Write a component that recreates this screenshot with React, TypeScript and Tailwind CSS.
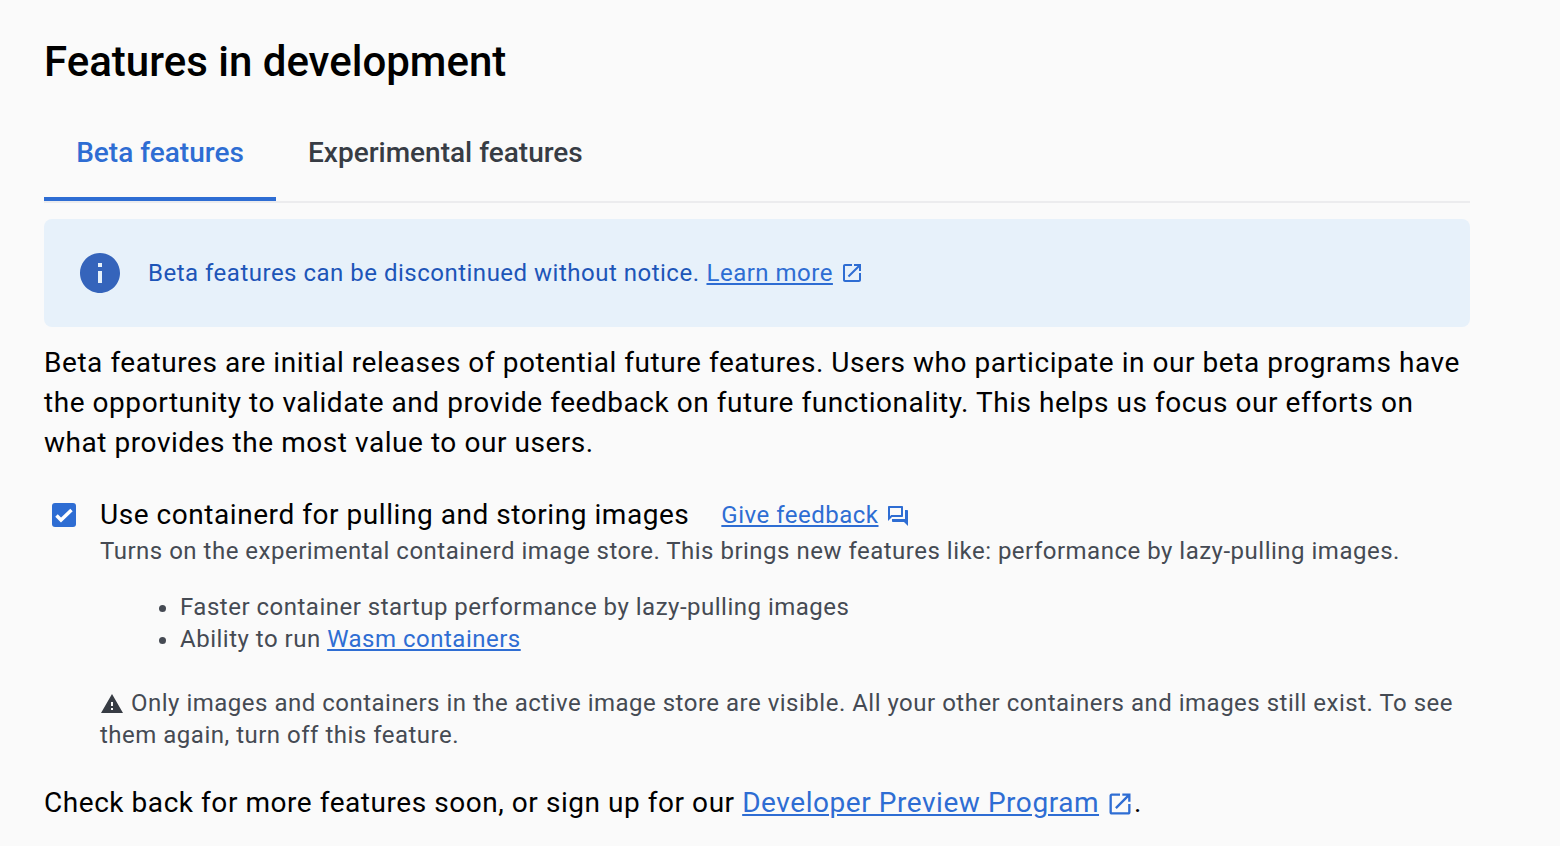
const Ext = ({ className }: { className: string }) => (
  <svg viewBox="0 0 24 24" fill="currentColor" className={className}>
    <path d="M19 19H5V5h7V3H5c-1.11 0-2 .9-2 2v14c0 1.1.89 2 2 2h14c1.1 0 2-.9 2-2v-7h-2v7zM14 3v2h3.59l-9.83 9.83 1.41 1.41L19 6.41V10h2V3h-7z" />
  </svg>
);

export default function App() {
  return (
    <div className="min-h-[846px] h-[846px] overflow-hidden bg-[#fafafa] pl-[44px] pr-[90px] text-black font-['Roboto',sans-serif]">
      <h1 className="pt-[37px] text-[42px] leading-[50px] font-medium tracking-[0px] text-black">Features in development</h1>
      <div className="mt-[17px] flex h-[99px] border-b-2 border-[#ececee]">
        <div className="h-[97px] w-[232px] border-b-4 border-[#2e6dd3] pt-[29px] text-center text-[28px] leading-[40px] font-medium text-[#2e6dd3]">Beta features</div>
        <div className="h-[97px] px-[32px] pt-[29px] text-[28px] leading-[40px] font-medium text-[#373c44]">Experimental features</div>
      </div>
      <div className="mt-[16px] flex h-[108px] items-center rounded-lg bg-[#e7f1fa] pl-[32px] text-[24px] tracking-[0.5px] text-[#1d55b8]">
        <svg viewBox="0 0 24 24" fill="#3564bb" className="h-[48px] w-[48px] shrink-0">
          <path d="M12 2C6.48 2 2 6.48 2 12s4.48 10 10 10 10-4.48 10-10S17.52 2 12 2zm1 15h-2v-6h2v6zm0-8h-2V7h2v2z" />
        </svg>
        <span className="ml-[24px]">Beta features can be discontinued without notice. </span>
        <a className="ml-[7px] text-[#2e6dd3] underline underline-offset-2">Learn more</a>
        <Ext className="ml-[7px] h-[24px] w-[24px] text-[#2e6dd3]" />
      </div>
      <p className="mt-[16px] text-[28px] leading-[40px] tracking-[0.55px]">
        Beta features are initial releases of potential future features. Users who participate in our beta programs have the opportunity to validate and provide feedback on future functionality. This helps us focus our efforts on what provides the most value to our users.
      </p>
      <div className="mt-[32px] flex">
        <div className="ml-[8px] mt-[8px] flex h-[24px] w-[24px] shrink-0 items-center justify-center rounded-[3px] bg-[#2e6dd3]">
          <svg viewBox="0 0 24 24" fill="none" stroke="white" strokeWidth="3.5" className="h-[24px] w-[24px]">
            <path d="M4.5 12.5l4.5 4.5L19.5 7" />
          </svg>
        </div>
        <div className="ml-[24px] min-w-0 flex-1">
          <div className="flex h-[40px] items-center">
            <span className="text-[28px] leading-[40px] tracking-[0.55px]">Use containerd for pulling and storing images</span>
            <a className="ml-[32px] text-[24px] tracking-[0.5px] text-[#2e6dd3] underline underline-offset-2">Give feedback</a>
            <svg viewBox="0 0 24 24" fill="#2e6dd3" className="ml-[7px] mt-[2px] h-[24px] w-[24px]">
              <path d="M15 4v7H5.17L4 12.17V4h11m1-2H3c-.55 0-1 .45-1 1v14l4-4h10c.55 0 1-.45 1-1V3c0-.55-.45-1-1-1zm5 4h-2v9H6v2c0 .55.45 1 1 1h11l4 4V7c0-.55-.45-1-1-1z" />
            </svg>
          </div>
          <div className="text-[24px] leading-[32px] tracking-[0.5px] text-[#454a53]">
            <p>Turns on the experimental containerd image store. This brings new features like: performance by lazy-pulling images.</p>
            <ul className="mt-[24px] list-disc pl-[80px]">
              <li>Faster container startup performance by lazy-pulling images</li>
              <li>Ability to run <a className="text-[#2e6dd3] underline underline-offset-2">Wasm containers</a></li>
            </ul>
            <p className="mt-[32px]">
              <svg viewBox="0 0 24 24" fill="#373c44" className="mr-[7px] inline-block h-[24px] w-[24px] align-[-5px]">
                <path d="M1 21h22L12 2 1 21zm12-3h-2v-2h2v2zm0-4h-2v-4h2v4z" />
              </svg>
              Only images and containers in the active image store are visible. All your other containers and images still exist. To see them again, turn off this feature.
            </p>
          </div>
        </div>
      </div>
      <p className="mt-[32px] text-[28px] leading-[40px] tracking-[0.55px]">
        Check back for more features soon, or sign up for our <a className="text-[#2e6dd3] underline underline-offset-2">Developer Preview Program</a>
        <Ext className="ml-[7px] inline-block h-[28px] w-[28px] align-[-6px] text-[#2e6dd3]" />.
      </p>
    </div>
  );
}
